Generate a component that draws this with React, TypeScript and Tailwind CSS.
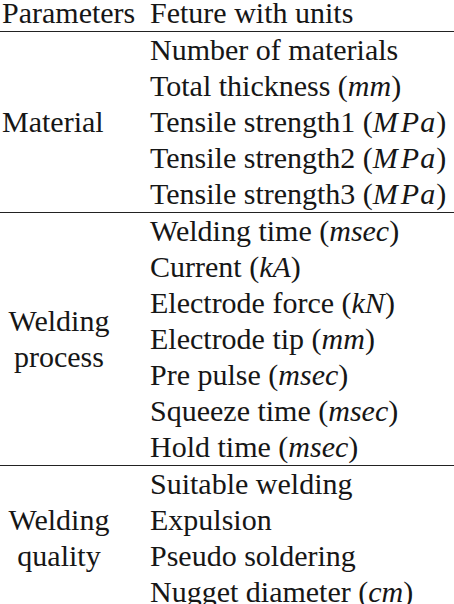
import type { ReactNode } from 'react';

function M({ children }: { children: ReactNode }) {
  return <span className="italic">{children}</span>;
}

function MPa() {
  return (
    <>
      (<span className="italic mr-[3px]">M</span>
      <span className="italic mr-[1px]">P</span>
      <span className="italic">a</span>
      <span className="ml-[1px]">)</span>
    </>
  );
}

function Group({ label, rows, centered }: { label: ReactNode; rows: ReactNode[]; centered?: boolean }) {
  return (
    <div className="flex border-b border-[#222] last:border-b-0">
      <div className="w-[150px] shrink-0 flex items-center">
        <div className={centered ? "ml-[8px] w-[102px] text-center" : "pl-[2px]"}>{label}</div>
      </div>
      <div className="flex flex-col">
        {rows.map((r, i) => (
          <div key={i} className="whitespace-nowrap">
            {r}
          </div>
        ))}
      </div>
    </div>
  );
}

export default function App() {
  return (
    <div className="font-['Liberation_Serif'] text-[30px] h-[604px] w-[454px] overflow-hidden bg-white text-[#161616] leading-[36px]">
      <div className="flex leading-[26px] pb-[5px] border-b border-[#222] whitespace-nowrap">
        <div className="w-[150px] shrink-0 pl-[2px]">Parameters</div>
        <div>Feture with units</div>
      </div>

      <Group
        label="Material"
        rows={[
          'Number of materials',
          <>Total thickness (<M>mm</M>)</>,
          <>Tensile strength1 <MPa /></>,
          <>Tensile strength2 <MPa /></>,
          <>Tensile strength3 <MPa /></>,
        ]}
      />

      <Group
        centered
        label={
          <>
            <div>Welding</div>
            <div>process</div>
          </>
        }
        rows={[
          <>Welding time (<M>msec</M>)</>,
          <>Current (<M>k</M><M>A</M>)</>,
          <>Electrode force (<M>kN</M>)</>,
          <>Electrode tip (<M>mm</M>)</>,
          <>Pre pulse (<M>msec</M>)</>,
          <>Squeeze time (<M>msec</M>)</>,
          <>Hold time (<M>msec</M>)</>,
        ]}
      />

      <Group
        centered
        label={
          <>
            <div>Welding</div>
            <div>quality</div>
          </>
        }
        rows={[
          'Suitable welding',
          'Expulsion',
          'Pseudo soldering',
          <>Nugget diameter (<M>cm</M>)</>,
        ]}
      />
    </div>
  );
}
